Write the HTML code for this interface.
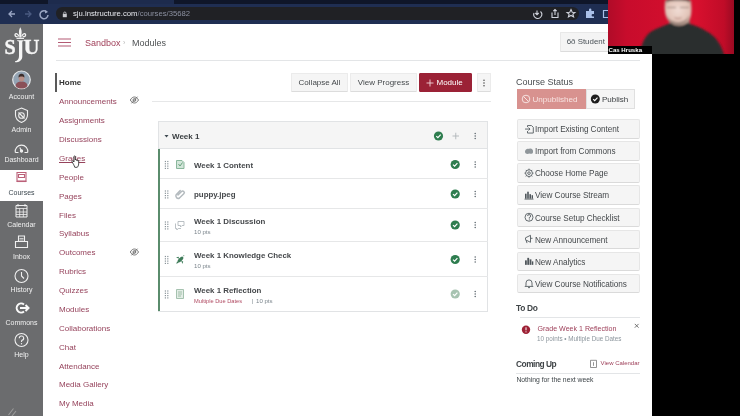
<!DOCTYPE html>
<html><head><meta charset="utf-8">
<style>
*{margin:0;padding:0;box-sizing:border-box}
html,body{width:740px;height:416px;overflow:hidden;background:#fff}
body{position:relative;font-family:"Liberation Sans",sans-serif;color:#3a3e41}
.a{position:absolute;white-space:nowrap}
/* browser chrome */
#tabs{left:0;top:0;width:740px;height:5px;background:#0f1629}
#tabact{left:48px;top:0;width:126px;height:5px;background:#1d2b4d}
#tool{left:0;top:4.3px;width:740px;height:19.7px;background:#1f2e52}
#url{left:56px;top:7.3px;width:523px;height:12.7px;background:#202125;border-radius:6.3px}
#urltxt{left:73px;top:8.1px;font-size:7.7px;line-height:12px;color:#e8eaf0}
#urltxt span{color:#8b90a0;font-weight:normal}
/* sidebar */
#side{left:0;top:24px;width:43px;height:392px;background:#6b6c6e}
.nl{font-size:7px;color:#f0f0f0;width:43px;text-align:center;left:0;line-height:8px}
#cact{left:0;top:169.5px;width:43px;height:31px;background:#fff}
/* header */
#ham{left:58px;top:38px;width:13px;height:9px}
.crumb{font-size:9px;line-height:12px;top:36.5px}
#hr1{left:56px;top:60px;width:584px;height:1px;background:#e3e5e7}
/* course nav */
.cn{left:59px;font-size:8px;line-height:10px;color:#96435c}
#homebar{left:55px;top:73px;width:2px;height:19px;background:#595959}
/* toolbar buttons */
.btn{height:19.5px;background:#f5f5f5;border:1px solid #ebebeb;border-bottom-color:#dcdcdc;border-radius:1px;font-size:8px;line-height:18px;color:#45494c;text-align:center;top:72.5px;padding-top:0.5px}
#hr2{left:152px;top:101px;width:339px;height:1px;background:#e6e7e8}
/* modules */
#mod{left:158px;top:121px;width:330px;height:191px;border:1px solid #e1e3e5;background:#fff}
#modh{left:159px;top:122px;width:328px;height:27px;background:#f5f5f5;border-bottom:1px solid #e1e3e5}
#gbar{left:158px;top:149px;width:2px;height:162px;background:#5a8c6c}
.row{left:160px;width:328px;border-bottom:1px solid #e6e7e8}
.ttl{left:194px;font-size:7.9px;font-weight:bold;color:#45484b;line-height:10px}
.sub{left:194px;font-size:6.1px;color:#7b858c;line-height:8px}
.chk{width:9px;height:9px;border-radius:50%;background:#2f7a4f}
.keb{width:2px;height:8px}
/* right side */
.rb{left:517px;width:123px;height:19.5px;background:#f5f5f5;border:1px solid #e6e6e6;border-bottom-color:#dadada;border-radius:2px;font-size:8.2px;line-height:19px;color:#45494c;padding-left:17px;letter-spacing:-0.05px}
.rh{left:516px;font-size:9px;line-height:12px;color:#4a4e51}
/* black area + webcam */
#black{left:652px;top:53px;width:88px;height:363px;background:#000}
#cam{left:608px;top:0;width:132px;height:54px;background:#000;overflow:hidden}
body{filter:blur(0.3px)}
</style></head><body>
<div class="a" id="tabs"></div>
<div class="a" id="tabact"></div>
<div class="a" id="tool"></div>
<div class="a" id="url"></div>
<div class="a" id="urltxt">sju.instructure.com<span>/courses/35682</span></div>
<svg class="a" style="left:6px;top:8px" width="44" height="12" viewBox="0 0 44 12">
 <path d="M9 6H3M6 3L3 6L6 9" stroke="#9aa6c4" stroke-width="1.3" fill="none"/>
 <path d="M19 6H25M22 3L25 6L22 9" stroke="#4a5a80" stroke-width="1.3" fill="none"/>
 <path d="M41 4A4 4 0 1 0 42 7" stroke="#9aa6c4" stroke-width="1.5" fill="none"/><path d="M39 2L42 4L39 5.5Z" fill="#9aa6c4"/>
</svg>
<svg class="a" style="left:62px;top:10.5px" width="6" height="7"><rect x="0.8" y="2.8" width="4" height="3.4" fill="#c9cbd0"/><path d="M1.6 2.8V2.2A1.2 1.2 0 0 1 4 2.2V2.8" stroke="#c9cbd0" stroke-width="0.8" fill="none"/></svg>

<svg class="a" style="left:530px;top:7px" width="80" height="14" viewBox="530 7 80 14">
 <g fill="none" stroke="#d0d3dc" stroke-width="1.1">
  <path d="M540.5 11.5A4 4 0 1 1 534 13"/><path d="M537 10.5V14.5M535.3 13L537 14.7L538.7 13"/>
  <path d="M552 12.5V17.5H558V12.5"/><path d="M555 9.5V15M553.3 11.2L555 9.5L556.7 11.2"/>
  <path d="M571 9.5L572.2 12.2L575 12.4L572.9 14.2L573.6 17L571 15.5L568.4 17L569.1 14.2L567 12.4L569.8 12.2Z"/>
 </g>
 <path d="M586 11H589V9.8A1.2 1.2 0 0 1 591.4 9.8V11H594V14H592.8A1.2 1.2 0 0 0 592.8 16.4H594V18H586Z" fill="#a9bfe8"/>
 <path d="M603.5 10.5H609V17.5H603.5Z" fill="none" stroke="#a9bfe8" stroke-width="1.2"/>
</svg>
<!-- sidebar -->
<div class="a" id="side"></div>
<div class="a" id="cact"></div>
<svg class="a" style="left:0;top:24px" width="43" height="392" viewBox="0 24 43 392">
 <!-- fleur -->
 <g fill="#f2f2f2">
  <path d="M20.3 27.2C19 29.5 18.6 32 19.2 34.5L19.4 37.5H21.2L21.4 34.5C22 32 21.6 29.5 20.3 27.2Z"/>
 </g>
 <g fill="none" stroke="#f2f2f2" stroke-width="1.3">
  <path d="M19 36.5C17.5 33 14.8 33 15 35.2C15.2 36.8 16.8 37 17.4 36"/>
  <path d="M21.6 36.5C23.1 33 25.8 33 25.6 35.2C25.4 36.8 23.8 37 23.2 36"/>
  <path d="M16.5 38.3H24"/>
 </g>
 <text x="4.5" y="53.6" font-family="Liberation Serif" font-weight="bold" font-size="20" fill="#f6f6f6" stroke="#f6f6f6" stroke-width="0.4">S</text>
 <text x="23.4" y="53.6" font-family="Liberation Serif" font-weight="bold" font-size="20" fill="#f6f6f6" stroke="#f6f6f6" stroke-width="0.3" textLength="16" lengthAdjust="spacingAndGlyphs">U</text>
 <path d="M17.2 40.3H23.6V40.9L22.3 41.6V56.5C22.3 60 19.5 62.3 15.2 62.3L15 61.2C17.8 60.8 19 59 19 56V41.6L17.2 40.9Z" fill="#f6f6f6"/>
 <!-- avatar -->
 <circle cx="21.5" cy="79.8" r="8.8" fill="#93a3b3" stroke="#e6e8ea" stroke-width="1.2"/>
 <path d="M15.5 86C16 82.5 18.5 81.5 21.5 81.5C24.5 81.5 27 82.5 27.5 86C26 87.8 24 88.6 21.5 88.6C19 88.6 17 87.8 15.5 86Z" fill="#8a5058"/>
 <ellipse cx="21.5" cy="78.2" rx="2.8" ry="3.2" fill="#b89088"/>
 <path d="M18.6 77.5C18.4 74.5 20 73.8 21.5 73.8C23 73.8 24.6 74.5 24.4 77.5C23.5 76 19.5 76 18.6 77.5Z" fill="#3a2c2a"/>
 <!-- admin shield -->
 <g fill="none" stroke="#f0f0f0" stroke-width="1.1">
  <path d="M21.5 108L27.5 110.5V115C27.5 118.5 25 121 21.5 122.5C18 121 15.5 118.5 15.5 115V110.5Z"/>
  <path d="M18.5 112.5L24.5 118.5"/>
  <circle cx="21.5" cy="115.5" r="2.8"/>
 </g>
 <!-- dashboard gauge -->
 <g fill="none" stroke="#f0f0f0" stroke-width="1.1">
  <path d="M15.3 152.5A6.3 6.3 0 1 1 27.7 152.5M15.3 152.5H18.5M24.5 152.5H27.7"/>
  <path d="M21.5 151L19.8 147.5"/><circle cx="21.5" cy="151" r="1.1" fill="#f0f0f0"/>
 </g>
 <!-- courses book -->
 <g fill="none" stroke="#bb6078" stroke-width="1.1">
  <path d="M17 172.5H26V181H17Z"/>
  <path d="M18.5 174.5H24.5V177.5H18.5Z"/>
  <path d="M16.5 181.5H26.5"/>
 </g>
 <!-- calendar -->
 <g fill="none" stroke="#f0f0f0" stroke-width="1">
  <path d="M16 205.5H27V217H16Z"/>
  <path d="M16 208.5H27M16 212H27M16 214.5H27M19.7 208.5V217M23.3 208.5V217" stroke-width="0.8"/>
  <path d="M18 204V206.5M25 204V206.5"/>
 </g>
 <!-- inbox -->
 <g fill="none" stroke="#f0f0f0" stroke-width="1.1">
  <path d="M15.5 241.5H27.5V247.5H15.5Z"/>
  <path d="M18.5 241.5V236H24.5V241.5"/>
  <path d="M19.5 238.5H23.5M19.5 240H23.5" stroke-width="0.7"/>
 </g>
 <!-- history -->
 <g fill="none" stroke="#f0f0f0" stroke-width="1.1">
  <circle cx="21.5" cy="276" r="6.5"/>
  <path d="M21.5 272V276L24 278.5"/>
 </g>
 <!-- commons -->
 <g fill="none" stroke="#fafafa" stroke-width="2">
  <path d="M24 304.5A4.5 4.5 0 1 0 24 311.5"/>
  <path d="M20 308H28.5"/>
  <path d="M25.5 305L28.5 308L25.5 311"/>
 </g>
 <!-- help -->
 <g fill="none" stroke="#f0f0f0" stroke-width="1.1">
  <circle cx="21.5" cy="340" r="6.5"/>
  <path d="M19.3 338.3A2.2 2.2 0 1 1 22 340.3C21.5 340.6 21.5 341 21.5 342"/>
 </g>
 <circle cx="21.5" cy="343.8" r="0.7" fill="#f0f0f0"/>
 <path d="M8.5 415L13.5 408.5M12 416L16 411" stroke="#9a9a9a" stroke-width="1.1" fill="none"/>
</svg>
<div class="a nl" style="top:92.5px">Account</div>
<div class="a nl" style="top:125.5px">Admin</div>
<div class="a nl" style="top:156.3px">Dashboard</div>
<div class="a nl" style="top:189px;color:#3d4850">Courses</div>
<div class="a nl" style="top:220.5px">Calendar</div>
<div class="a nl" style="top:252.5px">Inbox</div>
<div class="a nl" style="top:285.5px">History</div>
<div class="a nl" style="top:318.5px">Commons</div>
<div class="a nl" style="top:351px">Help</div>

<!-- main header -->
<svg class="a" id="ham" viewBox="0 0 13 9"><path d="M0 1H13M0 4.5H13M0 8H13" stroke="#b35a74" stroke-width="1.05"/></svg>
<div class="a crumb" style="left:85px;color:#a0405a">Sandbox</div>
<div class="a crumb" style="left:123px;color:#b8b8b8;font-size:7px">›</div>
<div class="a crumb" style="left:132px;color:#4f5254">Modules</div>
<div class="a" style="left:560px;top:32px;width:50px;height:19.5px;background:#f4f4f4;border:1px solid #e8e8e8;border-bottom-color:#dcdcdc;border-radius:1px"></div>
<div class="a" style="left:566.7px;top:37px;font-size:7.9px;line-height:10px;color:#4a5258">6ð Student</div>
<div class="a" id="hr1"></div>

<!-- course nav -->
<div class="a" id="homebar"></div>
<div class="a cn" style="top:78.3px;color:#333;font-weight:bold">Home</div>
<div class="a cn" style="top:97.2px">Announcements</div>
<div class="a cn" style="top:116.1px">Assignments</div>
<div class="a cn" style="top:134.9px">Discussions</div>
<div class="a cn" style="top:153.8px;text-decoration:underline">Grades</div>
<div class="a cn" style="top:172.7px">People</div>
<div class="a cn" style="top:191.6px">Pages</div>
<div class="a cn" style="top:210.5px">Files</div>
<div class="a cn" style="top:229.3px">Syllabus</div>
<div class="a cn" style="top:248.2px">Outcomes</div>
<div class="a cn" style="top:267.1px">Rubrics</div>
<div class="a cn" style="top:286.0px">Quizzes</div>
<div class="a cn" style="top:304.9px">Modules</div>
<div class="a cn" style="top:323.7px">Collaborations</div>
<div class="a cn" style="top:342.6px">Chat</div>
<div class="a cn" style="top:361.5px">Attendance</div>
<div class="a cn" style="top:380.4px">Media Gallery</div>
<div class="a cn" style="top:399.3px">My Media</div>

<svg class="a" style="left:0;top:0" width="740" height="416" viewBox="0 0 740 416">
 <g fill="none" stroke="#666" stroke-width="0.9">
  <path d="M130.3 100C131.5 97.8 133 97 134.4 97C135.8 97 137.3 97.8 138.5 100C137.3 102.2 135.8 103 134.4 103C133 103 131.5 102.2 130.3 100Z"/>
  <circle cx="134.4" cy="100" r="1.4"/><path d="M131.5 103.3L137.5 96.7"/>
  <path d="M130.3 252C131.5 249.8 133 249 134.4 249C135.8 249 137.3 249.8 138.5 252C137.3 254.2 135.8 255 134.4 255C133 255 131.5 254.2 130.3 252Z"/>
  <circle cx="134.4" cy="252" r="1.4"/><path d="M131.5 255.3L137.5 248.7"/>
 </g>
 <path d="M73.8 164.8L72 161.8C71.6 161 72.6 160.4 73.1 161L74 162V156.5C74 155.7 75.3 155.7 75.3 156.5V160C75.3 159.3 76.5 159.3 76.5 160V160.4C76.5 159.8 77.6 159.8 77.6 160.4V160.9C77.6 160.4 78.7 160.4 78.7 161V164C78.7 165.5 78 166.5 77.3 167.3H74.8Z" fill="#fff" stroke="#222" stroke-width="0.8"/>
</svg>
<!-- toolbar -->
<div class="a btn" style="left:291px;width:57px">Collapse All</div>
<div class="a btn" style="left:350px;width:67px">View Progress</div>
<div class="a btn" style="left:419px;width:53px;background:#9b2236;border-color:#9b2236;color:#fff;text-align:left;padding-left:16.5px">Module</div><svg class="a" style="left:426px;top:79px" width="8" height="8"><path d="M0.5 4H7.5M4 0.5V7.5" stroke="#f3d6da" stroke-width="0.9"/></svg>
<div class="a btn" style="left:477px;width:14px"></div><svg class="a" style="left:477px;top:73px" width="14" height="20"><circle cx="7" cy="7.3" r="0.8" fill="#555"/><circle cx="7" cy="10" r="0.8" fill="#555"/><circle cx="7" cy="12.7" r="0.8" fill="#555"/></svg>
<div class="a" id="hr2"></div>

<!-- modules -->
<div class="a" id="mod"></div>
<div class="a" id="modh"></div>
<div class="a" style="left:172px;top:132px;font-size:8px;font-weight:bold;line-height:10px;color:#3a3e41">Week 1</div>
<div class="a" id="gbar"></div>
<div class="a row" style="top:149px;height:30px"></div>
<div class="a row" style="top:178px;height:31px"></div>
<div class="a row" style="top:209px;height:33px"></div>
<div class="a row" style="top:242px;height:35px"></div>
<div class="a ttl" style="top:160.7px">Week 1 Content</div>
<div class="a ttl" style="top:189.7px">puppy.jpeg</div>
<div class="a ttl" style="top:216.7px">Week 1 Discussion</div>
<div class="a sub" style="top:228px">10 pts</div>
<div class="a ttl" style="top:250.7px">Week 1 Knowledge Check</div>
<div class="a sub" style="top:262px">10 pts</div>
<div class="a ttl" style="top:285.7px">Week 1 Reflection</div>
<div class="a sub" style="top:296.5px"><span style="color:#b04a62;font-size:5.7px">Multiple Due Dates</span></div><div class="a sub" style="left:251.5px;top:296.5px">|</div><div class="a sub" style="left:256px;top:296.5px">10 pts</div>

<svg class="a" style="left:0;top:0" width="740" height="416" viewBox="0 0 740 416">
<g fill="#8a949a"><rect x="164.8" y="160.9" width="1.2" height="1.2"/><rect x="167.2" y="160.9" width="1.2" height="1.2"/><rect x="164.8" y="163.2" width="1.2" height="1.2"/><rect x="167.2" y="163.2" width="1.2" height="1.2"/><rect x="164.8" y="165.5" width="1.2" height="1.2"/><rect x="167.2" y="165.5" width="1.2" height="1.2"/><rect x="164.8" y="167.8" width="1.2" height="1.2"/><rect x="167.2" y="167.8" width="1.2" height="1.2"/><rect x="164.8" y="190.4" width="1.2" height="1.2"/><rect x="167.2" y="190.4" width="1.2" height="1.2"/><rect x="164.8" y="192.7" width="1.2" height="1.2"/><rect x="167.2" y="192.7" width="1.2" height="1.2"/><rect x="164.8" y="195.0" width="1.2" height="1.2"/><rect x="167.2" y="195.0" width="1.2" height="1.2"/><rect x="164.8" y="197.3" width="1.2" height="1.2"/><rect x="167.2" y="197.3" width="1.2" height="1.2"/><rect x="164.8" y="221.4" width="1.2" height="1.2"/><rect x="167.2" y="221.4" width="1.2" height="1.2"/><rect x="164.8" y="223.7" width="1.2" height="1.2"/><rect x="167.2" y="223.7" width="1.2" height="1.2"/><rect x="164.8" y="226.0" width="1.2" height="1.2"/><rect x="167.2" y="226.0" width="1.2" height="1.2"/><rect x="164.8" y="228.3" width="1.2" height="1.2"/><rect x="167.2" y="228.3" width="1.2" height="1.2"/><rect x="164.8" y="255.9" width="1.2" height="1.2"/><rect x="167.2" y="255.9" width="1.2" height="1.2"/><rect x="164.8" y="258.2" width="1.2" height="1.2"/><rect x="167.2" y="258.2" width="1.2" height="1.2"/><rect x="164.8" y="260.5" width="1.2" height="1.2"/><rect x="167.2" y="260.5" width="1.2" height="1.2"/><rect x="164.8" y="262.8" width="1.2" height="1.2"/><rect x="167.2" y="262.8" width="1.2" height="1.2"/><rect x="164.8" y="290.4" width="1.2" height="1.2"/><rect x="167.2" y="290.4" width="1.2" height="1.2"/><rect x="164.8" y="292.7" width="1.2" height="1.2"/><rect x="167.2" y="292.7" width="1.2" height="1.2"/><rect x="164.8" y="295.0" width="1.2" height="1.2"/><rect x="167.2" y="295.0" width="1.2" height="1.2"/><rect x="164.8" y="297.3" width="1.2" height="1.2"/><rect x="167.2" y="297.3" width="1.2" height="1.2"/></g>
<path d="M164.5 135L168.5 135L166.5 137.5Z" fill="#3d4850"/>
<circle cx="438.5" cy="136" r="4.6" fill="#2e7d4f"/><path d="M436.3 136.1L437.9 137.6L440.7 134.6" stroke="#fff" stroke-width="1.2" fill="none"/>
<circle cx="455.2" cy="164.5" r="4.6" fill="#2e7d4f"/><path d="M453.0 164.6L454.6 166.1L457.4 163.1" stroke="#fff" stroke-width="1.2" fill="none"/>
<circle cx="455.2" cy="194" r="4.6" fill="#2e7d4f"/><path d="M453.0 194.1L454.6 195.6L457.4 192.6" stroke="#fff" stroke-width="1.2" fill="none"/>
<circle cx="455.2" cy="225" r="4.6" fill="#2e7d4f"/><path d="M453.0 225.1L454.6 226.6L457.4 223.6" stroke="#fff" stroke-width="1.2" fill="none"/>
<circle cx="455.2" cy="259.5" r="4.6" fill="#2e7d4f"/><path d="M453.0 259.6L454.6 261.1L457.4 258.1" stroke="#fff" stroke-width="1.2" fill="none"/>
<circle cx="455.2" cy="294" r="4.6" fill="#a7c3b1"/><path d="M453.0 294.1L454.6 295.6L457.4 292.6" stroke="#fff" stroke-width="1.2" fill="none"/>
<path d="M452.5 136H459M455.75 132.75V139.25" stroke="#b0b5b9" stroke-width="0.9"/>
<circle cx="475.2" cy="133.4" r="0.75" fill="#5a646b"/><circle cx="475.2" cy="136.0" r="0.75" fill="#5a646b"/><circle cx="475.2" cy="138.6" r="0.75" fill="#5a646b"/><circle cx="475.2" cy="161.9" r="0.75" fill="#5a646b"/><circle cx="475.2" cy="164.5" r="0.75" fill="#5a646b"/><circle cx="475.2" cy="167.1" r="0.75" fill="#5a646b"/><circle cx="475.2" cy="191.4" r="0.75" fill="#5a646b"/><circle cx="475.2" cy="194.0" r="0.75" fill="#5a646b"/><circle cx="475.2" cy="196.6" r="0.75" fill="#5a646b"/><circle cx="475.2" cy="222.4" r="0.75" fill="#5a646b"/><circle cx="475.2" cy="225.0" r="0.75" fill="#5a646b"/><circle cx="475.2" cy="227.6" r="0.75" fill="#5a646b"/><circle cx="475.2" cy="256.9" r="0.75" fill="#5a646b"/><circle cx="475.2" cy="259.5" r="0.75" fill="#5a646b"/><circle cx="475.2" cy="262.1" r="0.75" fill="#5a646b"/><circle cx="475.2" cy="291.4" r="0.75" fill="#5a646b"/><circle cx="475.2" cy="294.0" r="0.75" fill="#5a646b"/><circle cx="475.2" cy="296.6" r="0.75" fill="#5a646b"/>
<path d="M176.5 160.5H182L184 162.5V168.5H176.5Z" fill="#d3e6da" stroke="#7fb093" stroke-width="0.9"/><path d="M178.5 164L180 166L182.5 162.5" stroke="#5d9a74" stroke-width="0.9" fill="none"/>
<path d="M178 195L181.5 191.5A1.6 1.6 0 0 1 183.8 193.8L179.5 198A2.4 2.4 0 0 1 176.2 194.7L180.2 190.6" stroke="#b3babe" stroke-width="1.5" fill="none" stroke-linecap="round"/>
<path d="M178 221.5H184V225.5H182L180.5 227V225.5H178Z" fill="none" stroke="#a9b1b6" stroke-width="0.8"/><path d="M175.5 223.5V228.5H176.8V230L178.3 228.5H181" fill="none" stroke="#a9b1b6" stroke-width="0.8"/>
<g fill="#3f7c5a"><ellipse cx="180.5" cy="259.5" rx="3.6" ry="1.7" transform="rotate(-45 180.5 259.5)"/><path d="M176 257.5L178.5 256.8L179.3 258.8Z"/><path d="M182.5 264L183.2 261.5L181.2 260.7Z"/><path d="M176.2 263.8L177.2 261.2L178.8 262.8Z"/><path d="M183 255.5L184.3 255.2L184 256.5Z"/></g>
<path d="M176.5 289.5H183.5V298.5H176.5Z" fill="#e3ede6" stroke="#9cbca7" stroke-width="0.9"/><path d="M178 292H182M178 294H182M178 296H181" stroke="#8fb39b" stroke-width="0.8"/>
</svg>
<!-- right -->
<div class="a rh" style="top:76px">Course Status</div>
<div class="a" style="left:517px;top:89px;width:69px;height:20px;background:#d8928f"></div>
<div class="a" style="left:532.5px;top:95px;font-size:8.1px;line-height:10px;color:#f8e4e2">Unpublished</div>
<div class="a" style="left:586px;top:89px;width:49px;height:20px;background:#f5f5f5;border:1px solid #e0e0e0"></div>
<div class="a" style="left:590px;top:90px;width:9px;height:9px;"></div>
<div class="a" style="left:602px;top:94.8px;font-size:8px;line-height:10px;color:#3a3e41">Publish</div>
<div class="a rb" style="top:119.3px">Import Existing Content</div>
<div class="a rb" style="top:141.3px">Import from Commons</div>
<div class="a rb" style="top:163.4px">Choose Home Page</div>
<div class="a rb" style="top:185.4px">View Course Stream</div>
<div class="a rb" style="top:207.5px">Course Setup Checklist</div>
<div class="a rb" style="top:229.6px">New Announcement</div>
<div class="a rb" style="top:251.6px">New Analytics</div>
<div class="a rb" style="top:273.6px">View Course Notifications</div>
<div class="a rh" style="top:302.3px;font-weight:bold;font-size:8.4px;letter-spacing:-0.3px;color:#404548">To Do</div>
<div class="a" style="left:520px;top:317px;width:120px;height:1px;background:#e3e5e7"></div>
<div class="a" style="left:537.4px;top:324.2px;font-size:7.1px;line-height:10px;color:#9e405a">Grade Week 1 Reflection</div>
<div class="a" style="left:537px;top:335px;font-size:6.3px;line-height:8px;color:#8b959c">10 points • Multiple Due Dates</div>
<div class="a rh" style="top:358.4px;font-weight:bold;font-size:8.4px;letter-spacing:-0.5px;color:#404548">Coming Up</div>
<div class="a" style="left:600.6px;top:358px;font-size:6px;line-height:10px;color:#9e405a">View Calendar</div>
<div class="a" style="left:516px;top:373px;width:124px;height:1px;background:#e3e5e7"></div>
<div class="a" style="left:516.4px;top:375px;font-size:6.8px;line-height:9px;color:#3d4448">Nothing for the next week</div>

<svg class="a" style="left:0;top:0" width="740" height="416" viewBox="0 0 740 416">
 <g fill="none" stroke="#f6e2e0" stroke-width="1">
  <circle cx="526" cy="99" r="3.8"/><path d="M523.5 96.5L528.5 101.5"/>
 </g>
 <circle cx="595.3" cy="99" r="4.5" fill="#1d1d1d"/><path d="M593.2 99.1L594.7 100.6L597.5 97.7" stroke="#fff" stroke-width="1.1" fill="none"/>
 <g transform="translate(529 129.05)"><g fill="none" stroke="#555c61" stroke-width="0.9"><path d="M-1.5 -3.5H2.5L4.3 -1.7V4H-1.5V2M-1.5 -2V-3.5"/><path d="M-4 0H1M-0.5 -1.5L1 0L-0.5 1.5"/></g></g>
 <g transform="translate(529 151.10)"><path d="M-4 1C-4.2 -1.5 -2 -3 0 -2.2C2 -3.2 4.5 -1.8 4 0.8C4.2 2.5 2 3 0.5 2.5C-1.5 3 -3.8 3 -4 1Z" fill="#8f969a"/></g>
 <g transform="translate(529 173.15)"><g fill="none" stroke="#555c61" stroke-width="0.9"><circle r="3.4"/><circle r="1.3"/><path d="M0 -3.4V-4.5M0 3.4V4.5M-3.4 0H-4.5M3.4 0H4.5M-2.4 -2.4L-3.2 -3.2M2.4 2.4L3.2 3.2M-2.4 2.4L-3.2 3.2M2.4 -2.4L3.2 -3.2"/></g></g>
 <g transform="translate(529 195.20)"><g fill="#4f565b"><rect x="-4" y="-1.5" width="1.6" height="5"/><rect x="-1.8" y="-3.5" width="1.6" height="7"/><rect x="0.4" y="-1" width="1.6" height="4.5"/><rect x="2.6" y="0" width="1.4" height="3.5"/><rect x="-4.5" y="3.5" width="9" height="0.8"/></g></g>
 <g transform="translate(529 217.25)"><g fill="none" stroke="#555c61" stroke-width="0.9"><circle r="4"/><path d="M-1.4 -1.2A1.5 1.5 0 1 1 0.3 0.3V1.4"/></g><circle cx="0.3" cy="2.6" r="0.5" fill="#555c61"/></g>
 <g transform="translate(529 239.30)"><g fill="none" stroke="#555c61" stroke-width="0.9"><path d="M-3.5 -1.5L1.5 -4V3L-3.5 0.5ZM1.5 -1H3.5M-3 0.8L-2 3.8"/></g></g>
 <g transform="translate(529 261.35)"><g fill="#4f565b"><rect x="-4" y="-1" width="1.8" height="4.5"/><rect x="-1.7" y="-3.5" width="1.8" height="7"/><rect x="0.6" y="-2" width="1.8" height="5.5"/><rect x="2.9" y="0" width="1.4" height="3.5"/></g></g>
 <g transform="translate(529 283.40)"><g fill="none" stroke="#555c61" stroke-width="0.9"><path d="M-3 2V-0.5A3 3 0 0 1 3 -0.5V2L4 3H-4Z"/><path d="M-1 4.2H1"/></g></g>
</svg>
<svg class="a" style="left:0;top:0" width="740" height="416" viewBox="0 0 740 416">
 <circle cx="526" cy="329.7" r="4.2" fill="#9e2236"/><path d="M526 327.3V330.3" stroke="#fff" stroke-width="1"/><circle cx="526" cy="331.8" r="0.6" fill="#fff"/>
 <path d="M634.8 323.9L638.6 327.7M638.6 323.9L634.8 327.7" stroke="#666" stroke-width="0.9"/>
 <path d="M590.5 360.3H596.5V367.5H590.5Z" fill="none" stroke="#777" stroke-width="0.8"/><path d="M593.5 362.2V365.8" stroke="#777" stroke-width="0.8"/>
</svg>
<div class="a" id="black"></div>
<svg class="a" style="left:608px;top:0" width="132" height="54" viewBox="0 0 132 54">
 <defs>
  <linearGradient id="rg" x1="0" y1="0" x2="1" y2="0">
   <stop offset="0" stop-color="#b00c28"/>
   <stop offset="0.15" stop-color="#c80c2c"/>
   <stop offset="0.7" stop-color="#d8102e"/>
   <stop offset="0.92" stop-color="#c00c28"/>
   <stop offset="1" stop-color="#9a0a22"/>
  </linearGradient>
  <radialGradient id="face" cx="0.5" cy="0.45" r="0.6">
   <stop offset="0" stop-color="#f0dcd4"/>
   <stop offset="0.7" stop-color="#e2c4b8"/>
   <stop offset="1" stop-color="#c09a8c"/>
  </radialGradient>
  <filter id="bl"><feGaussianBlur stdDeviation="0.8"/></filter>
 </defs>
 <rect width="132" height="54" fill="#000"/>
 <rect width="126" height="54" fill="url(#rg)"/>
 <g filter="url(#bl)">
  <path d="M62 18C60 24 62 28 66 29H78C82 28 83 24 81 18Z" fill="#7a6a62"/>
  <path d="M57 1C56 10 57 19 63 23C67 26 74 26 79 23C84 19 84 10 83 1C82 -3 58 -3 57 1Z" fill="url(#face)"/>
  <path d="M58 2C59 -1 62 -1 64 -1H77C80 -1 82 0 82 2C79 1 76 0.5 70 0.5C64 0.5 61 1 58 2Z" fill="#3a302c"/>
  <path d="M59 7.5H68M72 7.5H81" stroke="#9a8078" stroke-width="1"/>
  <path d="M59 15C60 22 65 25 70 25C75 25 80 22 81 15C79 20 75 22 70 22C65 22 61 20 59 15Z" fill="#a08a80"/>
  <path d="M66 17C68 18.5 72 18.5 74 17C73 19.5 67 19.5 66 17Z" fill="#a06a60"/>
  <path d="M31 60L32 54C34 41 38 33 48 29C55 26 60 24 63 23C67 27 75 27 79 23C85 25 92 27 98 31C108 36 113 45 116 54L117 60Z" fill="#2a2f2d"/>
 </g>
 <rect x="0" y="46" width="44" height="8" fill="#000"/>
 <text x="0.5" y="51.8" font-family="Liberation Sans" font-weight="bold" font-size="6.1" fill="#fff">Cas Hruska</text>
</svg>
</body></html>
